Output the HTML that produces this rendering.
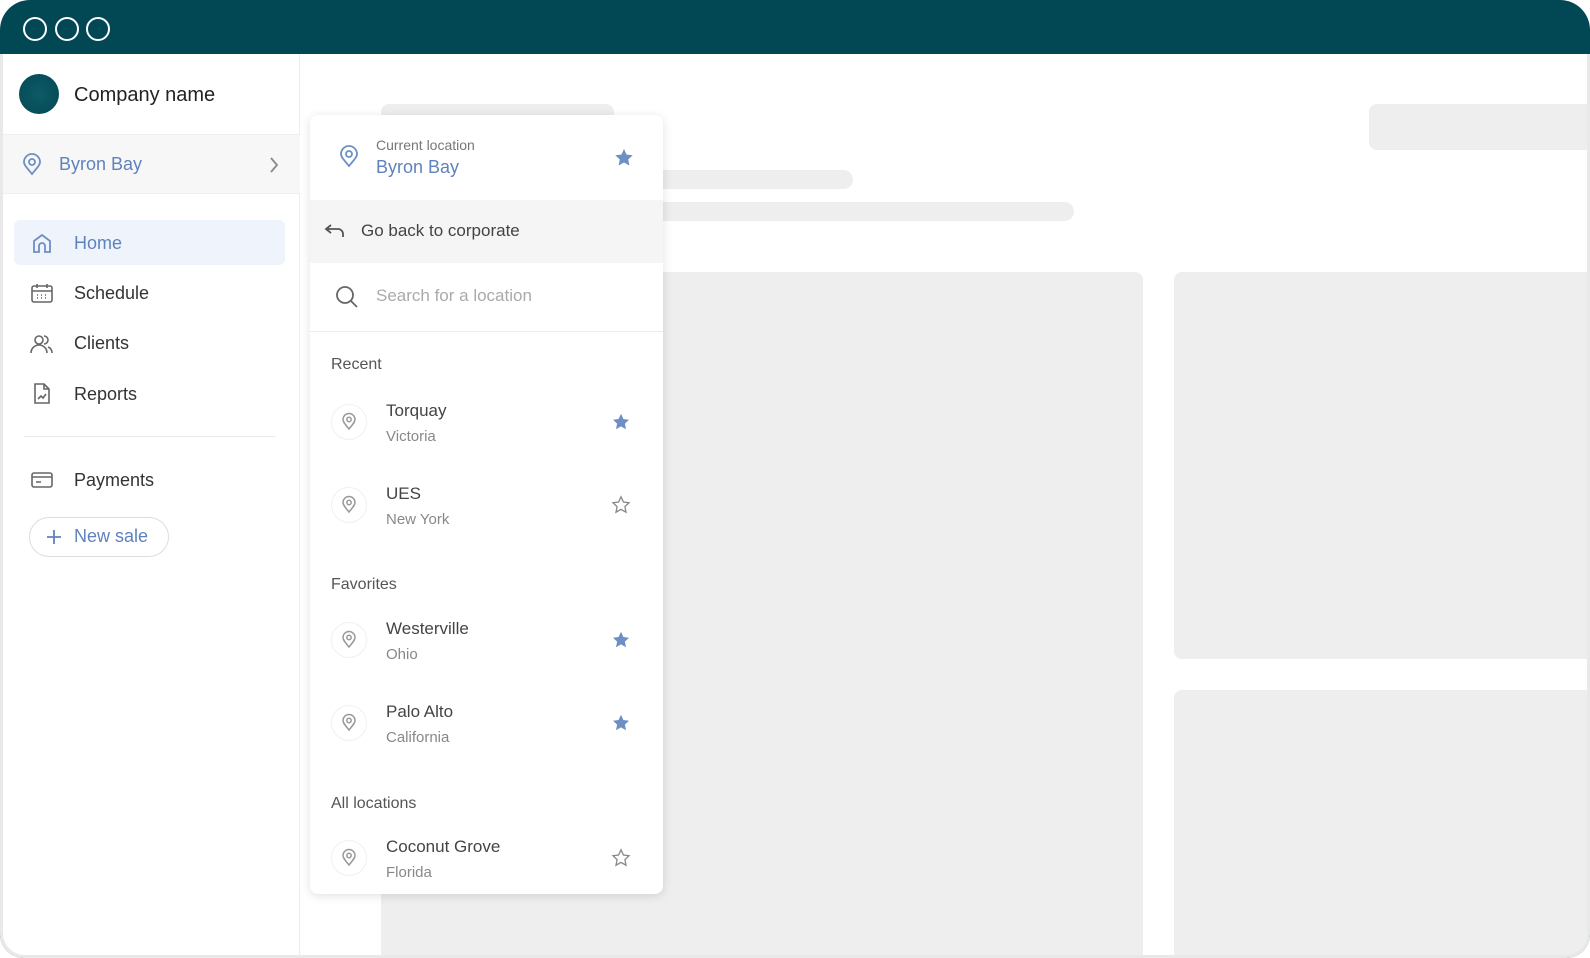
<!DOCTYPE html>
<html><head><meta charset="utf-8"><style>
*{box-sizing:border-box;margin:0;padding:0}
body{width:1590px;height:958px;background:#fff;font-family:"Liberation Sans",sans-serif;position:relative;overflow:hidden;color:#333}
.a{position:absolute}
.g{position:absolute;background:#eeeeee;border-radius:8px}
.t{position:absolute;white-space:nowrap}
svg{position:absolute;overflow:visible}
</style></head><body>
<div class="a" style="left:0;top:0;width:1590px;height:958px;border-radius:30px 30px 24px 24px;background:#024854"></div>
<div class="a" style="left:0;top:54px;width:1590px;height:904px;background:#e9e9e9;border-radius:0 0 24px 24px"></div>
<div class="a" style="left:3px;top:54px;width:1584px;height:901px;background:#fff;border-radius:0 0 22px 22px;overflow:hidden">
 <div class="g" style="left:378px;top:50px;width:233px;height:20px"></div>
 <div class="g" style="left:378px;top:116px;width:472px;height:19px;border-radius:10px"></div>
 <div class="g" style="left:378px;top:148px;width:693px;height:19px;border-radius:10px"></div>
 <div class="g" style="left:1366px;top:50px;width:230px;height:46px"></div>
 <div class="g" style="left:378px;top:218px;width:762px;height:700px"></div>
 <div class="g" style="left:1171px;top:218px;width:430px;height:387px"></div>
 <div class="g" style="left:1171px;top:636px;width:430px;height:300px"></div>
</div>
<svg style="left:0;top:0" width="120" height="54"><g fill="none" stroke="#fff" stroke-width="2"><circle cx="35" cy="29" r="11"/><circle cx="67" cy="29" r="11"/><circle cx="98" cy="29" r="11"/></g></svg>
<div class="a" style="left:3px;top:54px;width:297px;height:901px;background:#fff;border-right:1px solid #ececec;border-radius:0 0 0 22px"></div>
<div class="a" style="left:19px;top:74px;width:40px;height:40px;border-radius:50%;background:radial-gradient(circle,#0d5a66,#024854)"></div>
<div class="t" style="left:74px;top:84px;font-size:20px;color:#222">Company name</div>
<div class="a" style="left:3px;top:134px;width:297px;height:60px;background:#f7f7f7;border-top:1px solid #eee;border-bottom:1px solid #eee"></div>
<svg style="left:22px;top:154px" width="20" height="22" fill="none" stroke="#6d8fc4" stroke-width="1.8"><path d="M10 20C5 14 2 11 2 8a8 8 0 0 1 16 0c0 3-3 6-8 12z"/><circle cx="10" cy="8" r="3"/></svg>
<div class="t" style="left:59px;top:154px;font-size:18px;color:#5f82bd">Byron Bay</div>
<svg style="left:269px;top:157px" width="10" height="16" fill="none" stroke="#888" stroke-width="1.8"><path d="M2 1l6 7-6 7"/></svg>
<div class="a" style="left:14px;top:220px;width:271px;height:45px;background:#eef3fc;border-radius:6px"></div>
<svg style="left:32px;top:233px" width="20" height="20" fill="none" stroke="#6d8fc4" stroke-width="1.8"><path d="M2 19V8l8-6 8 6v11h-5v-6a3 3 0 0 0-6 0v6z"/></svg>
<div class="t" style="left:74px;top:233px;font-size:18px;color:#5f82bd">Home</div>
<svg style="left:31px;top:283px" width="22" height="20" fill="none" stroke="#666" stroke-width="1.6"><rect x="1" y="3" width="20" height="16" rx="2"/><path d="M1 8h20M6 1v4M16 1v4"/><path d="M6 12h1M10 12h1M14 12h1M6 15h1M10 15h1M14 15h1" stroke-width="1.4"/></svg>
<div class="t" style="left:74px;top:283px;font-size:18px;color:#333">Schedule</div>
<svg style="left:30px;top:334px" width="24" height="20" fill="none" stroke="#666" stroke-width="1.6"><circle cx="9" cy="6" r="4"/><path d="M1 19a8 8 0 0 1 16 0M14 2a4 4 0 0 1 0 8M18 13a6 6 0 0 1 4 6"/></svg>
<div class="t" style="left:74px;top:333px;font-size:18px;color:#333">Clients</div>
<svg style="left:33px;top:383px" width="18" height="22" fill="none" stroke="#666" stroke-width="1.6"><path d="M2 1h9l5 5v14H2zM11 1v5h5M5 16l3-3 2 2 3-4"/></svg>
<div class="t" style="left:74px;top:384px;font-size:18px;color:#333">Reports</div>
<div class="a" style="left:24px;top:436px;width:252px;height:1px;background:#eaeaea"></div>
<svg style="left:31px;top:472px" width="22" height="16" fill="none" stroke="#666" stroke-width="1.6"><rect x="1" y="1" width="20" height="14" rx="2"/><path d="M1 5h20M5 10h5"/></svg>
<div class="t" style="left:74px;top:470px;font-size:18px;color:#333">Payments</div>
<div class="a" style="left:29px;top:517px;width:140px;height:40px;border:1px solid #ddd;border-radius:20px"></div>
<svg style="left:47px;top:530px" width="14" height="14" stroke="#5f82bd" stroke-width="1.8"><path d="M7 0v14M0 7h14"/></svg>
<div class="t" style="left:74px;top:526px;font-size:18px;color:#5f82bd">New sale</div>
<div class="a" style="left:310px;top:115px;width:353px;height:779px;background:#fff;border-radius:8px;box-shadow:0 2px 10px rgba(0,0,0,.12);overflow:hidden">
 <div class="a" style="left:0;top:85px;width:353px;height:63px;background:#f5f5f5"></div>
 <div class="a" style="left:0;top:216px;width:353px;height:1px;background:#ececec"></div>
</div>
<svg style="left:339px;top:146px" width="20" height="22" fill="none" stroke="#6d8fc4" stroke-width="1.8"><path d="M10 20C5 14 2 11 2 8a8 8 0 0 1 16 0c0 3-3 6-8 12z"/><circle cx="10" cy="8" r="3"/></svg>
<div class="t" style="left:376px;top:137px;font-size:14px;color:#777">Current location</div>
<div class="t" style="left:376px;top:157px;font-size:18px;color:#5f82bd">Byron Bay</div>
<svg style="left:615px;top:149px" width="18" height="17"><path fill="#6d8fc4" d="M9 0l2.6 5.6 6.1.7-4.5 4.2 1.2 6-5.4-3-5.4 3 1.2-6L.3 6.3l6.1-.7z"/></svg>
<svg style="left:325px;top:224px" width="20" height="14" fill="none" stroke="#555" stroke-width="1.8"><path d="M6 1L1 5l5 4M1 5h12a5 5 0 0 1 5 5v3"/></svg>
<div class="t" style="left:361px;top:221px;font-size:17px;color:#444">Go back to corporate</div>
<svg style="left:336px;top:286px" width="22" height="22" fill="none" stroke="#666" stroke-width="1.8"><circle cx="9" cy="9" r="8"/><path d="M15 15l6 6"/></svg>
<div class="t" style="left:376px;top:286px;font-size:17px;color:#aaa">Search for a location</div>
<div class="t" style="left:331px;top:356px;font-size:16px;color:#555">Recent</div>
<div class="t" style="left:331px;top:576px;font-size:16px;color:#555">Favorites</div>
<div class="t" style="left:331px;top:795px;font-size:16px;color:#555">All locations</div>
<div id="items"></div>
<script>
var items=[["Torquay","Victoria",422,1],["UES","New York",505,0],["Westerville","Ohio",640,1],["Palo Alto","California",723,1],["Coconut Grove","Florida",858,0]];
var h="";
items.forEach(function(it){var c=it[2];
h+='<div class="a" style="left:331px;top:'+(c-18)+'px;width:36px;height:36px;border-radius:50%;border:1px solid #f0f0f0;background:#fff"></div>';
h+='<svg style="left:342px;top:'+(c-9)+'px" width="14" height="18" fill="none" stroke="#999" stroke-width="1.5"><path d="M7 16C3 11 1 9 1 6.5a6 6 0 0 1 12 0C13 9 11 11 7 16z"/><circle cx="7" cy="6.5" r="2.2"/></svg>';
h+='<div class="t" style="left:386px;top:'+(c-21)+'px;font-size:17px;color:#444">'+it[0]+'</div>';
h+='<div class="t" style="left:386px;top:'+(c+6)+'px;font-size:15px;color:#888">'+it[1]+'</div>';
h+='<svg style="left:612px;top:'+(c-9)+'px" width="18" height="17"><path '+(it[3]?'fill="#6d8fc4"':'fill="none" stroke="#888" stroke-width="1.3"')+' d="M9 0.8l2.4 5.2 5.6.7-4.1 3.9 1.1 5.6-5-2.8-5 2.8 1.1-5.6L1 6.7l5.6-.7z"/></svg>';
});
document.getElementById("items").innerHTML=h;
</script>
</body></html>
